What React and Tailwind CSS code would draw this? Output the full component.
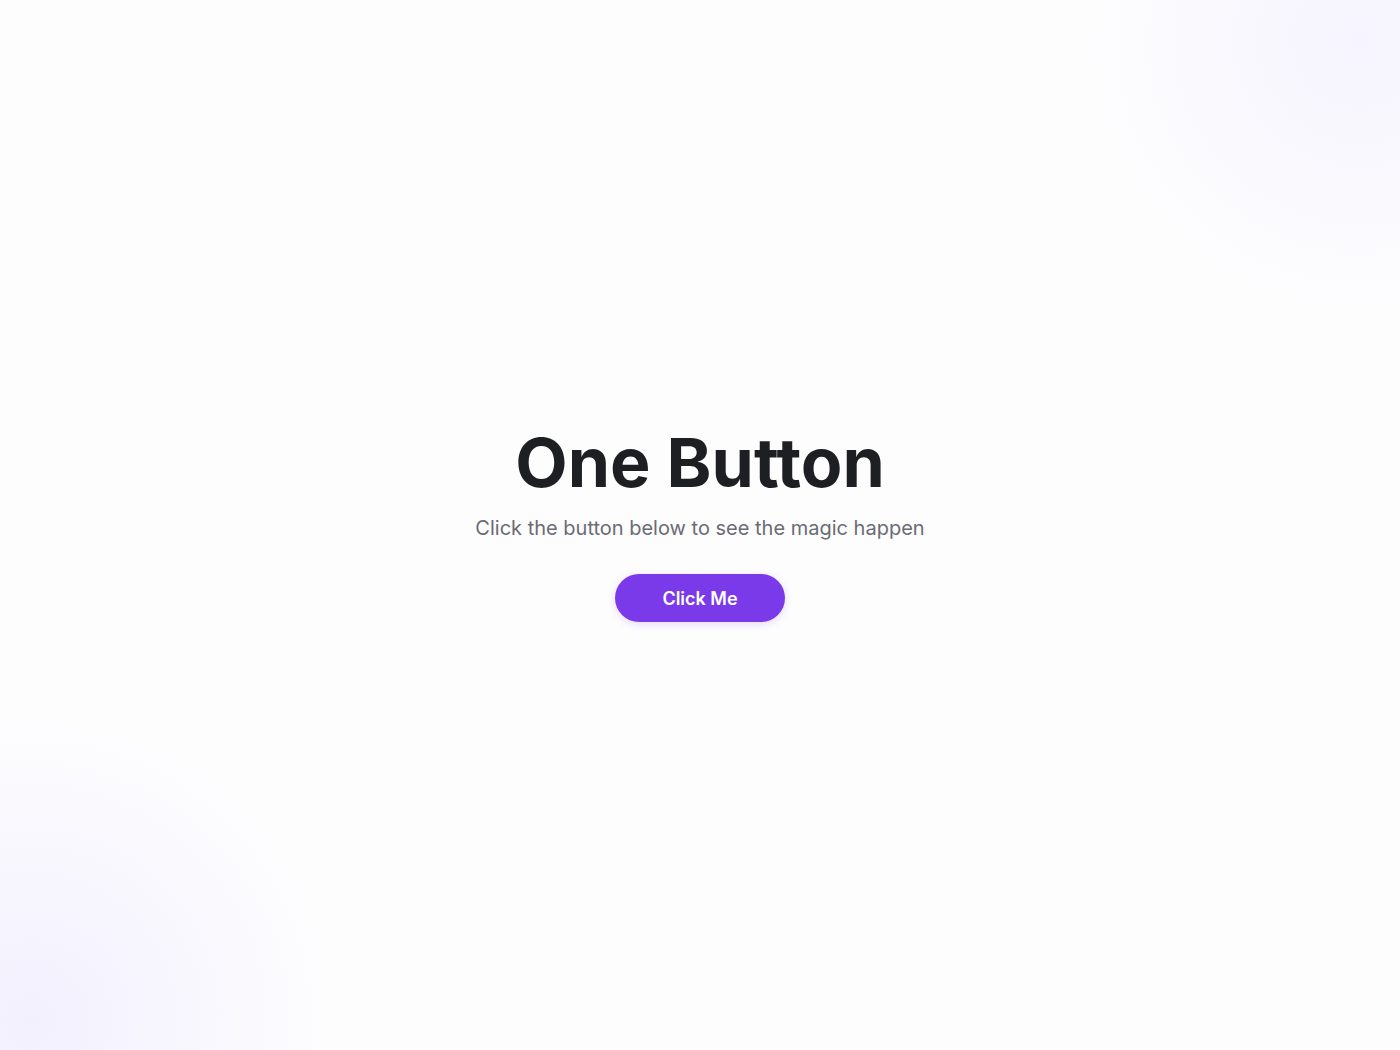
import React from 'react';

const App = () => {
    return (
        <div
            className="relative min-h-screen w-full overflow-hidden bg-[#fdfdfe] flex items-center justify-center"
            style={{ fontFamily: 'Inter, "Noto Sans", sans-serif' }}
        >
            {/* soft corner glows */}
            <div className="pointer-events-none absolute -top-[240px] -right-[240px] h-[560px] w-[560px] rounded-full bg-[radial-gradient(circle,rgba(237,233,254,0.45)_0%,rgba(255,255,255,0)_70%)]" />
            <div className="pointer-events-none absolute -bottom-[280px] -left-[280px] h-[620px] w-[620px] rounded-full bg-[radial-gradient(circle,rgba(237,233,254,0.65)_0%,rgba(255,255,255,0)_70%)]" />

            <div className="relative flex flex-col items-center pb-[2px]">
                <h1 className="text-[68px] leading-[72px] font-bold tracking-normal text-[#1e1f23]">
                    One Button
                </h1>
                <p className="mt-[16px] text-[20px] leading-[28px] text-[#6b6b74]">
                    Click the button below to see the magic happen
                </p>
                <button className="mt-[32px] h-[48px] w-[170px] rounded-full bg-[#7b3aea] text-[18px] font-semibold text-white shadow-[0_2px_8px_rgba(124,58,237,0.18)]">
                    Click Me
                </button>
            </div>
        </div>
    );
};

export default App;
